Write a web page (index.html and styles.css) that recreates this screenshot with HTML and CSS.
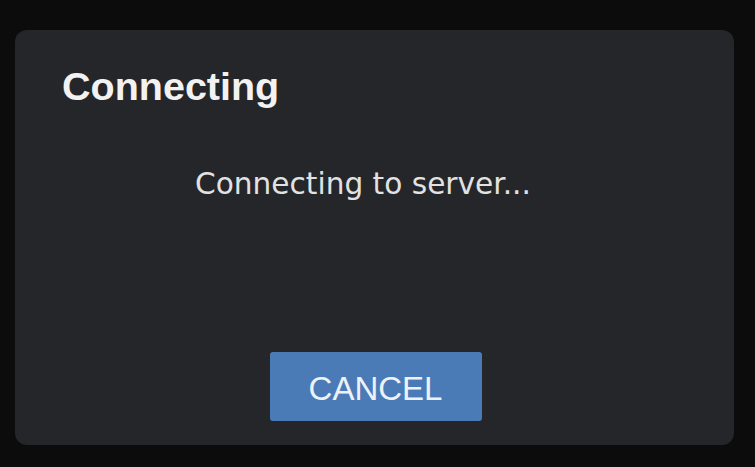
FILE: index.html
```html
<!DOCTYPE html>
<html>
<head>
<meta charset="utf-8">
<link rel="stylesheet" href="styles.css">
</head>
<body>
<div class="dialog">
  <h1 class="dialog-title">Connecting</h1>
  <p class="dialog-message">Connecting to server...</p>
  <div class="dialog-actions">
    <button class="btn-cancel">CANCEL</button>
  </div>
</div>
</body>
</html>
```

FILE: styles.css
```css
html, body {
  margin: 0;
  padding: 0;
  background: #0c0c0d;
}
body {
  padding: 30px 21px 22px 15px;
  font-family: "Liberation Sans", Arial, sans-serif;
}
.dialog {
  box-sizing: border-box;
  width: 719px;
  height: 415px;
  background: #25262a;
  border-radius: 12px;
  padding: 36px 0 24px 0;
  display: flex;
  flex-direction: column;
}
.dialog-title {
  margin: 0;
  padding-left: 47px;
  font-size: 39.5px;
  line-height: 40px;
  font-weight: bold;
  color: #f2f2f2;
}
.dialog-message {
  margin: 63px 0 0 0;
  padding-right: 23px;
  text-align: center;
  font-family: "DejaVu Sans", sans-serif;
  font-size: 29.6px;
  line-height: 30px;
  color: #e2e2e2;
}
.dialog-actions {
  margin-top: auto;
  display: flex;
  justify-content: center;
  padding-left: 2px;
}
.btn-cancel {
  box-sizing: border-box;
  width: 212px;
  height: 69px;
  padding: 5px 0 0 0;
  border: none;
  border-radius: 3px;
  background: #4b7bb6;
  color: #eef2f8;
  font-family: "Liberation Sans", Arial, sans-serif;
  font-size: 33px;
  line-height: 64px;
}
```
